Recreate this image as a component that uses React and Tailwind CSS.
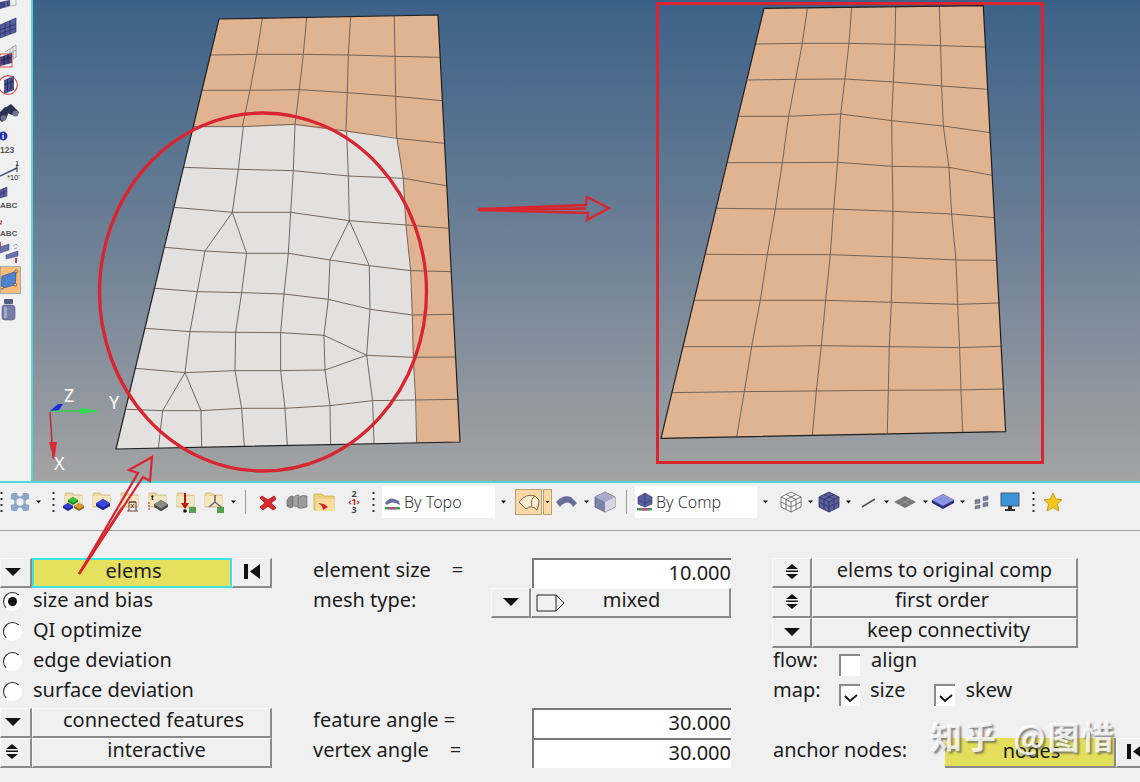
import React from "react";

const Poly = ({ p, c = "#6b5e53", w = 2.8 }) => (
  <polyline points={p} fill="none" stroke={c} strokeWidth={w} />
);

const leftUpper = [
  "93,150 230,148 370,148 505,150 645,154 780,157",
  "65,256 210,256 358,254 502,263 647,274 787,287",
  "38,365 187,365 345,358 498,378 650,400 793,415",
  "247,40 230,148 210,256 187,365",
  "380,38 370,148 358,254 345,358",
  "512,35 505,150 502,263 498,378",
  "643,32 645,154 647,274 650,400",
];
const leftLower = [
  "252,202 415,208 580,212 745,228 910,235 1038,257",
  "222,322 397,337 572,337 748,362 918,375 1045,385",
  "195,442 315,453 440,460 565,460 690,480 808,497 932,512 1053,515",
  "165,565 292,575 425,578 552,582 685,598 810,628 937,645 1058,643",
  "135,685 270,695 407,697 542,698 672,706 800,766 940,772 1065,771",
  "105,805 255,818 405,812 542,812 675,810 800,766",
  "80,928 188,932 303,932 425,925 555,925 690,917 818,902 947,900 1073,898",
  "175,1045 188,932 255,818 270,695 292,575 315,453 397,337 415,208 430,82",
  "255,818 303,932 305,1042",
  "397,337 440,460 425,578 407,697 405,812 425,925 433,1040",
  "562,1038 555,925 542,812 542,698 552,582 565,460 572,337 580,212 585,75",
  "692,1035 690,917 675,810 672,706 685,598 690,480 748,362 745,228 740,95",
  "748,362 808,497 810,628 800,766 818,902 822,1030",
  "890,110 910,235 918,375 932,512 937,645 940,772 947,900 950,1030",
];
const rightMesh = [
  "318,132 457,130 597,130 735,133 872,137 1005,141",
  "294,240 437,238 585,237 730,246 875,258 1014,268",
  "268,349 416,349 572,342 725,362 880,378 1020,398",
  "232,488 397,488 563,487 727,499 897,502 1027,526",
  "200,625 376,627 551,627 729,634 905,642 1033,653",
  "168,763 352,764 541,764 727,771 918,780 1040,781",
  "134,901 331,901 527,901 724,907 923,913 1047,909",
  "100,1040 305,1040 514,1037 718,1040 929,1043 1053,1039",
  "67,1178 283,1175 499,1173 715,1171 933,1170 1060,1167",
  "472,25 457,130 437,238 416,349 397,488 376,627 352,764 331,901 305,1040 283,1175 260,1311",
  "605,22 597,130 585,237 572,342 563,487 551,627 541,764 527,901 514,1037 499,1173 487,1306",
  "737,20 735,133 730,246 725,362 727,499 729,634 727,771 724,907 718,1040 715,1171 712,1301",
  "868,18 872,137 875,258 880,378 897,502 905,642 918,780 923,913 929,1043 933,1170 938,1297",
];

function Viewport() {
  return (
    <div className="relative flex-1 bg-gradient-to-b from-[#3c6188] via-[#6d8096] to-[#a3a3a3]">
      <svg viewBox="33 0 1107 481" className="block h-full w-full">
        <polygon points="219,19 438,15 460,442 116,449" fill="#e0b391" />
        <polygon
          points="193,127 243,127 295,125 347,132 397,137 403,178 406,225 411,271 412,315 413,357 416,400 417,443 116,449"
          fill="#e2e1e0"
        />
        <g transform="translate(180,5) scale(0.3333)">
          {leftUpper.map((p) => (
            <Poly key={p} p={p} />
          ))}
        </g>
        <g transform="translate(100,100) scale(0.3333)">
          {leftLower.map((p) => (
            <Poly key={p} p={p} />
          ))}
        </g>
        <polygon points="219,19 438,15 460,442 116,449" fill="none" stroke="#1f1f1f" strokeWidth="1.2" />
        <g transform="translate(650,0) scale(0.3333)">
          <polygon points="342,25 1000,17 1067,1295 33,1315" fill="#e0b391" />
          {rightMesh.map((p) => (
            <Poly key={p} p={p} />
          ))}
          <polygon points="342,25 1000,17 1067,1295 33,1315" fill="none" stroke="#1f1f1f" strokeWidth="3.6" />
        </g>
        <g>
          <line x1="50" y1="412" x2="53" y2="458" stroke="#c8232c" strokeWidth="1.4" />
          <polygon points="49,442 57,442 54,461" fill="#d92a33" />
          <line x1="50" y1="411" x2="98" y2="411" stroke="#35d24a" strokeWidth="1.4" />
          <polygon points="80,408 100,411 80,414" fill="#2fdc4a" />
          <polygon points="50,411 58,404 63,404 59,410" fill="#1530d8" />
          <text x="64" y="402" fill="#fff" fontSize="18" fontFamily="Noto Sans, sans-serif">Z</text>
          <text x="109" y="409" fill="#fff" fontSize="18" fontFamily="Noto Sans, sans-serif">Y</text>
          <text x="54" y="470" fill="#fff" fontSize="18" fontFamily="Noto Sans, sans-serif">X</text>
        </g>
      </svg>
    </div>
  );
}

function LeftBar() {
  const f = "Liberation Sans, sans-serif";
  return (
    <div className="flex w-[32px] flex-col overflow-hidden bg-[#f0f0f0]">
      <svg viewBox="0 0 32 16" className="block h-[16px] w-[32px] shrink-0">
        <polygon points="0,2 10,0 10,6 0,9" fill="#3f4485" />
        <path d="M10 0v6l6-1V0M6 0v8" fill="none" stroke="#9a9a9a" strokeWidth="0.7" />
      </svg>
      <svg viewBox="0 16 32 24" className="block h-[24px] w-[32px] shrink-0">
        <polygon points="0,25 16,18 16,32 0,38" fill="#585e9e" stroke="#30346a" strokeWidth="0.7" />
        <path d="M5 23v13M10 21v13M0 30l16-6M0 34l16-6" stroke="#262a5e" strokeWidth="0.8" fill="none" />
      </svg>
      <svg viewBox="0 40 32 30" className="block h-[30px] w-[32px] shrink-0">
        <path d="M5 52l11-7v12l-6 4M10 49v12M13 47v11M5 56l11-6" fill="none" stroke="#8f8f8f" strokeWidth="0.8" />
        <polygon points="0,57 12,53 12,63 0,66" fill="#3f4485" />
        <path d="M4 56v9M8 54v9M0 61l12-4" stroke="#1a1d45" strokeWidth="0.8" />
        <rect x="0" y="54" width="12" height="13" fill="none" stroke="#d23a3a" strokeWidth="0.9" />
      </svg>
      <svg viewBox="0 70 32 28" className="block h-[28px] w-[32px] shrink-0">
        <circle cx="8" cy="85" r="9.3" fill="#fbfbfb" stroke="#d85050" strokeWidth="1.2" />
        <polygon points="4,80 14,76 14,90 4,94" fill="#4d5290" />
        <path d="M7.500 79v13M11 78v13M4 85l10-4" stroke="#20244f" strokeWidth="0.8" />
      </svg>
      <svg viewBox="0 98 32 28" className="block h-[28px] w-[32px] shrink-0">
        <path d="M0 112l5-5 5 2-4 10-4 3-2-2zM5 108l6-4 8 8-3 4-7-2z" fill="#2c3252" />
        <circle cx="15.500" cy="113.500" r="3" fill="#6b7296" />
        <circle cx="3.500" cy="118" r="2.800" fill="#6b7296" />
      </svg>
      <svg viewBox="0 126 32 30" className="block h-[30px] w-[32px] shrink-0">
        <circle cx="3" cy="136" r="4.500" fill="#2336b8" />
        <rect x="2.400" y="135" width="1.300" height="4" fill="#fff" />
        <rect x="2.400" y="133" width="1.300" height="1.200" fill="#fff" />
        <text x="0" y="153" fontSize="8.500" fontWeight="700" fill="#555" fontFamily={f}>123</text>
      </svg>
      <svg viewBox="0 156 32 28" className="block h-[28px] w-[32px] shrink-0">
        <path d="M0 176l17-8" stroke="#4a4f78" strokeWidth="1.4" />
        <path d="M17 164v8" stroke="#333" strokeWidth="1" />
        <text x="15" y="166" fontSize="8" fill="#333" fontFamily={f}>1</text>
        <text x="7" y="180" fontSize="7.500" fill="#333" fontFamily={f}>*10'</text>
      </svg>
      <svg viewBox="0 184 32 28" className="block h-[28px] w-[32px] shrink-0">
        <polygon points="0,190 7,187 7,196 0,198" fill="#585e9e" stroke="#30346a" strokeWidth="0.5" />
        <path d="M3.500 188v9M0 194l7-3" stroke="#262a5e" strokeWidth="0.6" />
        <text x="0" y="208" fontSize="8" fontWeight="700" fill="#555" fontFamily={f}>ABC</text>
      </svg>
      <svg viewBox="0 212 32 28" className="block h-[28px] w-[32px] shrink-0">
        <path d="M0 221h2l-2 3h2" stroke="#b23a3a" strokeWidth="1" fill="none" />
        <text x="0" y="236" fontSize="8" fontWeight="700" fill="#555" fontFamily={f}>ABC</text>
      </svg>
      <svg viewBox="0 240 32 26" className="block h-[26px] w-[32px] shrink-0">
        <polygon points="0,247 9,244 9,250 0,253" fill="#6a70ab" stroke="#3a3f75" strokeWidth="0.5" />
        <polygon points="6,255 18,251 18,256 6,259" fill="#6a70ab" stroke="#3a3f75" strokeWidth="0.5" />
        <path d="M0 242v5M16 258v5" stroke="#b22222" strokeWidth="1.6" />
        <path d="M13 246l3-2 2 2M14 249l3-1" stroke="#999" strokeWidth="0.9" fill="none" />
      </svg>
      <div className="flex h-[28px] w-[21px] shrink-0 items-center border border-[#a8a8a8] bg-[#f6bd7b]">
        <svg viewBox="0 0 20 26" className="block h-[26px] w-[20px]">
          <polygon points="1,9 16,4 15,18 0,22" fill="#4d82d0" stroke="#2b4f8c" strokeWidth="0.7" />
          <circle cx="16" cy="4" r="1.6" fill="#f6bd7b" stroke="#333" strokeWidth="0.6" />
          <circle cx="15" cy="18" r="1.6" fill="#f6bd7b" stroke="#333" strokeWidth="0.6" />
          <circle cx="1" cy="21" r="1.6" fill="#f6bd7b" stroke="#333" strokeWidth="0.6" />
        </svg>
      </div>
      <svg viewBox="0 294 32 28" className="block h-[28px] w-[32px] shrink-0">
        <rect x="4" y="299" width="9" height="5" rx="1" fill="#555a80" />
        <path d="M2 308q0-3 3-3h7q3 0 3 3v9q0 3-3 3H5q-3 0-3-3z" fill="#777ca6" stroke="#4c507a" strokeWidth="0.6" />
        <rect x="4" y="307" width="3" height="11" fill="#a6aacd" />
      </svg>
    </div>
  );
}

const Caret = ({ cls }) => (
  <svg viewBox="0 0 7 4" className={`block h-[4px] w-[7px] ${cls}`}>
    <polygon points="1,0.500 6,0.500 3.500,3.500" fill="#111" />
  </svg>
);
const Dots = ({ cls }) => (
  <svg viewBox="0 0 3 22" className={`block h-[22px] w-[3px] ${cls}`}>
    <path d="M1.500 1v20" stroke="#333" strokeWidth="2" strokeDasharray="2 4" />
  </svg>
);
const Sep = ({ cls }) => <div className={`h-[24px] w-px bg-[#9a9a9a] ${cls}`} />;

const Folder = ({ children }) => (
  <svg viewBox="0 0 22 24" className="block h-[24px] w-[22px]">
    <path d="M2 3h7l2 2h8v12H2z" fill="#ecd9a3" stroke="#c9b27a" strokeWidth="0.7" />
    <rect x="2" y="6" width="17" height="10" fill="#f5e6bd" />
    {children}
  </svg>
);
const Gem = ({ x, y, c, d, s = 1 }) => (
  <g transform={`translate(${x},${y}) scale(${s})`}>
    <polygon points="0,3 5,0 10,3 10,5 5,8 0,5" fill={d} />
    <polygon points="0,3 5,0 10,3 5,6" fill={c} />
  </g>
);

function TopBar() {
  return (
    <div className="flex h-[48px] items-center border-b border-[#a3a3a3] bg-[#f0f0f0] pb-[9px]">
      <Dots cls="" />
      <svg viewBox="0 0 22 22" className="ml-[7px] block h-[20px] w-[20px]">
        <rect x="1" y="1" width="20" height="20" rx="3" fill="#8aa6c8" />
        <circle cx="11" cy="11" r="4" fill="#f0f0f0" />
        <circle cx="2" cy="11" r="3" fill="#f0f0f0" />
        <circle cx="20" cy="11" r="3" fill="#f0f0f0" />
        <circle cx="11" cy="2" r="3" fill="#f0f0f0" />
        <circle cx="11" cy="20" r="3" fill="#f0f0f0" />
      </svg>
      <Caret cls="ml-[5px]" />
      <Dots cls="ml-[10px]" />
      <div className="ml-[8px]">
        <Folder>
          <Gem x="5" y="7" c="#38c53c" d="#1e8a22" />
          <Gem x="0" y="13" c="#3240d8" d="#1b2390" />
          <Gem x="11" y="13" c="#d89a3c" d="#8f6420" />
        </Folder>
      </div>
      <div className="ml-[6px]">
        <Folder>
          <Gem x="5" y="9" c="#3b48e0" d="#1b2390" s={1.4} />
        </Folder>
      </div>
      <div className="ml-[6px]">
        <Folder>
          <path d="M8 21h11M10 21v-9h7v9M10 12h7M12 14l3 4M15 14l-3 4" stroke="#5a3030" strokeWidth="0.9" fill="none" />
        </Folder>
      </div>
      <div className="ml-[6px]">
        <Folder>
          <Gem x="7" y="10" c="#8a8a8a" d="#4a4a4a" s={1.4} />
          <text x="4" y="10" fontSize="8" fontWeight="700" fill="#111" fontFamily="Liberation Sans, sans-serif">t</text>
          <path d="M2 12v8" stroke="#c22" strokeWidth="1" strokeDasharray="2 1" />
        </Folder>
      </div>
      <div className="ml-[6px]">
        <Folder>
          <path d="M10 3v12" stroke="#c21414" strokeWidth="2" />
          <polygon points="6,13 14,13 10,19" fill="#c21414" />
          <circle cx="10" cy="21" r="1.800" fill="#111" />
          <rect x="14" y="17" width="7" height="6" fill="#55a04a" />
        </Folder>
      </div>
      <div className="ml-[6px]">
        <Folder>
          <path d="M12 12V5M12 12l-6 5M12 12l6 5" stroke="#6a6a7a" strokeWidth="1.600" fill="none" />
          <rect x="14" y="17" width="7" height="6" fill="#55a04a" />
        </Folder>
      </div>
      <Caret cls="ml-[5px]" />
      <Sep cls="ml-[8px]" />
      <svg viewBox="0 0 20 20" className="ml-[12px] block h-[20px] w-[20px]">
        <path d="M4 4l6 4 6-4 2 3-5 4 5 5-3 2-5-4-5 4-3-3 5-4-5-5z" fill="#d82a2e" stroke="#c22" strokeWidth="1" strokeLinejoin="round" />
      </svg>
      <svg viewBox="0 0 24 20" className="ml-[7px] block h-[20px] w-[24px]">
        <path d="M2 8q3-5 6-4v11q-4 2-6-1z" fill="#8c8c8c" stroke="#666" strokeWidth="0.6" />
        <path d="M8 6q3-4 6-3v11q-4 2-6-1z" fill="#a3a3a3" stroke="#666" strokeWidth="0.6" />
        <path d="M13 6q4-4 9-2v11q-5 2-9 1z" fill="#9a9a9a" stroke="#666" strokeWidth="0.6" />
      </svg>
      <svg viewBox="0 0 22 24" className="ml-[4px] block h-[24px] w-[22px]">
        <path d="M1 4h8l2 2h10v14H1z" fill="#f2cf7c" stroke="#c9a04c" strokeWidth="0.7" />
        <path d="M3 9h18v12H3z" fill="#f7dd9c" />
        <path d="M5 13l6 1 4 3-5 3-1-4z" fill="#e02020" />
      </svg>
      <div className="ml-[9px] flex h-[24px] w-[20px] flex-col items-center text-[9px] font-bold leading-[8px] text-[#444]">
        <span>2</span>
        <span className="text-[#b22]">‹1›</span>
        <span>3</span>
      </div>
      <Dots cls="ml-[8px]" />
      <div className="ml-[7px] flex h-[32px] w-[113px] items-center bg-white pl-[2px] text-[16px] font-light text-[#333]">
        <svg viewBox="0 0 18 20" className="block h-[20px] w-[18px]">
          <path d="M1 11q5-8 14-2l1 4q-8-5-13 0z" fill="#6a6f9e" />
          <rect x="1" y="15" width="15" height="2.500" fill="#3f9a4a" />
          <rect x="6" y="15" width="5" height="2.500" fill="#d43fa0" />
        </svg>
        <span className="ml-[2px]">By Topo</span>
      </div>
      <div className="flex h-[32px] w-[17px] items-center justify-center bg-[#f0f0f0]">
        <Caret cls="" />
      </div>
      <div className="ml-[3px] flex h-[26px] w-[27px] items-center justify-center border border-[#b8a070] bg-[#fbd8a5]">
        <svg viewBox="0 0 24 18" className="block h-[18px] w-[24px]">
          <path d="M2 9q7-9 16-6l4 4q0 6-2 10Q14 11 9 16z" fill="#fdeccf" stroke="#6a5a3a" strokeWidth="0.9" />
          <path d="M18 3q-5 3-3 10" stroke="#6a5a3a" strokeWidth="0.8" fill="none" />
        </svg>
      </div>
      <div className="ml-px flex h-[26px] w-[9px] items-center justify-center border border-[#b8a070] bg-[#fbd8a5]">
        <Caret cls="scale-75" />
      </div>
      <svg viewBox="0 0 24 18" className="ml-[3px] block h-[18px] w-[24px]">
        <path d="M1 9q7-8 15-5l6 6-4 4q-3-6-8-4-3 1-5 4z" fill="#686d99" />
      </svg>
      <Caret cls="ml-[4px]" />
      <svg viewBox="0 0 22 22" className="ml-[4px] block h-[22px] w-[22px]">
        <polygon points="11,1 21,6 21,16 11,21 1,16 1,6" fill="#7d83ab" stroke="#4c5078" strokeWidth="0.7" />
        <polygon points="11,1 21,6 11,11 1,6" fill="#a8acca" />
        <polygon points="11,11 21,6 21,16 11,21" fill="#d4d6e2" />
      </svg>
      <Sep cls="ml-[10px]" />
      <div className="ml-[8px] flex h-[32px] w-[122px] items-center bg-white pl-[1px] text-[16px] font-light text-[#333]">
        <svg viewBox="0 0 18 20" className="block h-[20px] w-[18px]">
          <polygon points="9,1 16,5 16,12 9,15 2,12 2,5" fill="#5a5f9e" stroke="#30346a" strokeWidth="0.6" />
          <path d="M2 8l7 3 7-3M9 1v14" stroke="#30346a" strokeWidth="0.6" fill="none" />
          <rect x="1" y="16" width="15" height="2.500" fill="#3f9a4a" />
          <rect x="6" y="16" width="5" height="2.500" fill="#d43fa0" />
        </svg>
        <span className="ml-[2px]">By Comp</span>
      </div>
      <div className="flex h-[32px] w-[17px] items-center justify-center">
        <Caret cls="" />
      </div>
      <svg viewBox="0 0 22 22" className="ml-[6px] block h-[22px] w-[22px]">
        <path d="M11 1l10 5v10l-10 5-10-5V6zM1 6l10 5 10-5M11 11v10M6 3.500l10 5v10M16 3.500l-10 5v10M1 11l10 5 10-5" fill="#fff" stroke="#555" strokeWidth="0.8" />
      </svg>
      <Caret cls="ml-[5px]" />
      <svg viewBox="0 0 22 22" className="ml-[4px] block h-[22px] w-[22px]">
        <path d="M11 1l10 5v10l-10 5-10-5V6z" fill="#5a5f9e" stroke="#2c2f60" strokeWidth="0.8" />
        <path d="M1 6l10 5 10-5M11 11v10M6 3.500l10 5v10M16 3.500l-10 5v10M1 11l10 5 10-5" fill="none" stroke="#2c2f60" strokeWidth="0.8" />
      </svg>
      <Caret cls="ml-[5px]" />
      <svg viewBox="0 0 18 12" className="ml-[8px] block h-[12px] w-[18px]">
        <path d="M2 11L15 3" stroke="#555" strokeWidth="1.500" />
      </svg>
      <Caret cls="ml-[5px]" />
      <svg viewBox="0 0 22 12" className="ml-[4px] block h-[12px] w-[22px]">
        <polygon points="0,6 11,0 22,6 11,12" fill="#777" />
        <path d="M5 3l12 6M17 3L5 9" stroke="#aaa" strokeWidth="0.6" />
      </svg>
      <Caret cls="ml-[6px]" />
      <svg viewBox="0 0 22 16" className="ml-[3px] block h-[16px] w-[22px]">
        <polygon points="0,6 11,0 22,6 22,9 11,15 0,9" fill="#2a2f80" />
        <polygon points="0,6 11,0 22,6 11,12" fill="#8c93e0" />
      </svg>
      <Caret cls="ml-[5px]" />
      <svg viewBox="0 0 16 16" className="ml-[8px] block h-[16px] w-[16px]">
        <path d="M1 6l5-1v4l-5 1zM9 3l5-1v4l-5 1zM1 12l5-1v3l-5 1zM9 9l5-1v4l-5 1z" fill="#7d7fa6" stroke="#555" strokeWidth="0.4" />
      </svg>
      <svg viewBox="0 0 20 20" className="ml-[10px] block h-[20px] w-[20px]">
        <rect x="1" y="1" width="18" height="13" fill="#3b93d8" stroke="#4a5a6a" />
        <rect x="8" y="14" width="4" height="3" fill="#333" />
        <rect x="5" y="17" width="10" height="2" fill="#333" />
      </svg>
      <Dots cls="ml-[12px]" />
      <svg viewBox="0 0 20 20" className="ml-[8px] block h-[20px] w-[20px]">
        <polygon points="10,1 12.800,7 19,7.800 14.500,12 15.800,19 10,15.600 4.200,19 5.500,12 1,7.800 7.200,7" fill="#f5c518" stroke="#b89018" strokeWidth="0.8" />
      </svg>
    </div>
  );
}

const raised = "border-t border-l border-t-[#fafafa] border-l-[#fafafa] border-b-2 border-r-2 border-b-[#8a8a8a] border-r-[#8a8a8a]";

const Down = () => (
  <svg viewBox="0 0 16 8" className="block h-[8px] w-[16px]">
    <polygon points="0,0 16,0 8,8" fill="#111" />
  </svg>
);
const Spin = () => (
  <svg viewBox="0 0 12 15" className="block h-[15px] w-[12px]">
    <polygon points="6,0 12,5 0,5" fill="#111" />
    <rect x="0" y="6.500" width="12" height="1.500" fill="#111" />
    <polygon points="0,10 12,10 6,15" fill="#111" />
  </svg>
);
const Rewind = () => (
  <svg viewBox="0 0 16 15" className="block h-[15px] w-[16px]">
    <rect x="0" y="0" width="4" height="15" fill="#111" />
    <polygon points="16,0 16,15 6,7.500" fill="#111" />
  </svg>
);

const Btn = ({ cls, children }) => (
  <div className={`flex h-[30px] items-center justify-center pb-[5px] ${raised} ${cls}`}>{children}</div>
);
const IconBtn = ({ cls, children }) => (
  <div className={`flex h-[30px] items-center justify-center pb-[2px] ${raised} ${cls}`}>{children}</div>
);

const Radio = ({ label, on }) => (
  <div className="flex h-[30px] items-center pb-[6px]">
    <div className="ml-[3px] mt-[3px] flex h-[19px] w-[19px] items-center justify-center rounded-full border border-l-[#222] border-t-[#222] border-r-white border-b-white bg-white">
      {on && <div className="h-[9px] w-[9px] rounded-full bg-[#111]" />}
    </div>
    <span className="ml-[11px]">{label}</span>
  </div>
);

const Check = ({ on, cls }) => (
  <div className={`flex h-[22px] w-[21px] items-center justify-center border-t-2 border-l-2 border-t-[#8a8a8a] border-l-[#8a8a8a] bg-white ${cls}`}>
    {on && (
      <svg viewBox="0 0 14 10" className="mt-[4px] block h-[10px] w-[14px]">
        <path d="M1 3l5 5 7-6" fill="none" stroke="#111" strokeWidth="1.800" />
      </svg>
    )}
  </div>
);

const Field = ({ v }) => (
  <div className="ml-auto flex h-[30px] w-[199px] items-center justify-end border-t-2 border-l-2 border-t-[#7a7a7a] border-l-[#7a7a7a] bg-white pb-[3px]">
    {v}
  </div>
);

const Label = ({ children, cls = "" }) => (
  <span className={`whitespace-pre pb-[6px] ${cls}`}>{children}</span>
);

function Panel() {
  return (
    <div className="flex flex-1 bg-[#f0f0f0] pt-[27px] text-[20px] leading-[26px] text-[#1c1c1c]">
      <div className="flex w-[272px] flex-col">
        <div className="flex">
          <IconBtn cls="w-[32px] !justify-start pl-[4px]"><Down /></IconBtn>
          <div className="flex h-[30px] w-[200px] items-center justify-center border-2 border-[#3fe3e3] bg-[#e6e05f] pb-[5px] pl-[3px]">elems</div>
          <IconBtn cls="w-[40px]"><Rewind /></IconBtn>
        </div>
        <Radio label="size and bias" on />
        <Radio label="QI optimize" />
        <Radio label="edge deviation" />
        <Radio label="surface deviation" />
        <div className="flex">
          <IconBtn cls="w-[32px] !justify-start pl-[4px]"><Down /></IconBtn>
          <Btn cls="w-[240px] pl-[4px]">connected features</Btn>
        </div>
        <div className="flex">
          <IconBtn cls="w-[32px] !justify-start pl-[5px]"><Spin /></IconBtn>
          <Btn cls="w-[240px] pl-[10px]">interactive</Btn>
        </div>
      </div>

      <div className="ml-[41px] flex w-[418px] flex-col">
        <div className="flex h-[30px] items-center">
          <Label>element size    =</Label>
          <Field v="10.000" />
        </div>
        <div className="flex h-[30px] items-center">
          <Label>mesh type:</Label>
          <IconBtn cls="ml-auto w-[40px]"><Down /></IconBtn>
          <Btn cls="relative w-[200px] pl-[2px]">
            <svg viewBox="0 0 30 20" className="absolute left-[4px] top-[4px] block h-[20px] w-[30px]">
              <path d="M1 2h19l8 8-8 8H1zM20 2v16" fill="none" stroke="#222" strokeWidth="1" />
            </svg>
            mixed
          </Btn>
        </div>
        <div className="h-[90px]" />
        <div className="flex h-[30px] items-center">
          <Label>feature angle =</Label>
          <Field v="30.000" />
        </div>
        <div className="flex h-[30px] items-center">
          <Label>vertex angle    =</Label>
          <Field v="30.000" />
        </div>
      </div>

      <div className="ml-[41px] flex w-[368px] flex-col">
        <div className="flex">
          <IconBtn cls="w-[40px]"><Spin /></IconBtn>
          <Btn cls="w-[266px]">elems to original comp</Btn>
        </div>
        <div className="flex">
          <IconBtn cls="w-[40px]"><Spin /></IconBtn>
          <Btn cls="w-[266px] pr-[5px]">first order</Btn>
        </div>
        <div className="flex">
          <IconBtn cls="w-[40px]"><Down /></IconBtn>
          <Btn cls="w-[266px] pl-[8px]">keep connectivity</Btn>
        </div>
        <div className="flex h-[30px] items-center pl-px">
          <Label cls="w-[66px]">flow:</Label>
          <Check cls="mb-[-4px]" />
          <Label cls="ml-[11px]">align</Label>
        </div>
        <div className="flex h-[30px] items-center pl-px">
          <Label cls="w-[66px]">map:</Label>
          <Check on cls="mb-[-4px]" />
          <Label cls="ml-[10px]">size</Label>
          <Check on cls="mb-[-4px] ml-[29px]" />
          <Label cls="ml-[10px]">skew</Label>
        </div>
        <div className="h-[30px]" />
        <div className="flex h-[30px] items-center pl-px">
          <Label cls="w-[172px] shrink-0">anchor nodes:</Label>
          <Btn cls="w-[171px] shrink-0 !border-t-0 !border-l-0 bg-[#e3df5a] pl-[4px] !pb-[3px]">nodes</Btn>
          <IconBtn cls="w-[40px] shrink-0 !justify-start pl-[10px]"><Rewind /></IconBtn>
        </div>
      </div>
    </div>
  );
}

export default function App() {
  return (
    <div className="relative flex h-[782px] w-[1140px] flex-col overflow-hidden bg-[#f0f0f0] font-['Noto_Sans','Open_Sans',sans-serif]">
      <div className="flex h-[483px] border-b-2 border-[#55d6d6]">
        <div className="flex w-[31px] overflow-hidden">
          <LeftBar />
        </div>
        <div className="w-[2px] bg-[#55d6d6]" />
        <Viewport />
      </div>
      <TopBar />
      <Panel />

      {/* red annotations and watermark lying over the page */}
      <svg viewBox="0 0 1140 782" className="pointer-events-none absolute left-0 top-0 h-[782px] w-[1140px]">
        <ellipse cx="263" cy="292" rx="163.500" ry="179" fill="none" stroke="#d9252f" strokeWidth="3.300" />
        <rect x="657.500" y="3.500" width="385" height="459" fill="none" stroke="#d9252f" strokeWidth="3" />
        <polygon points="479,209 586,205 587,197 609,208 587,220 588,213 479,210" fill="none" stroke="#d9252f" strokeWidth="2.400" strokeLinejoin="miter" />
        <path d="M479 209.500L586 208.500" stroke="#d9252f" strokeWidth="2.400" />
        <polygon points="79,574 138,473 129,470 152,457 150,481 143,477 79,574" fill="none" stroke="#d9252f" strokeWidth="2.200" />
        <path d="M79 574L122 508" stroke="#d9252f" strokeWidth="2.600" />
      </svg>
      <div className="pointer-events-none absolute left-[930px] top-[711px] whitespace-nowrap font-['Noto_Sans_CJK_SC',sans-serif] text-[32px] font-bold leading-[48px] tracking-[2px] text-white/80 [word-spacing:6px] [text-shadow:2px_2px_2px_rgba(90,90,90,0.7)]">
        知乎 @图惜
      </div>
    </div>
  );
}
